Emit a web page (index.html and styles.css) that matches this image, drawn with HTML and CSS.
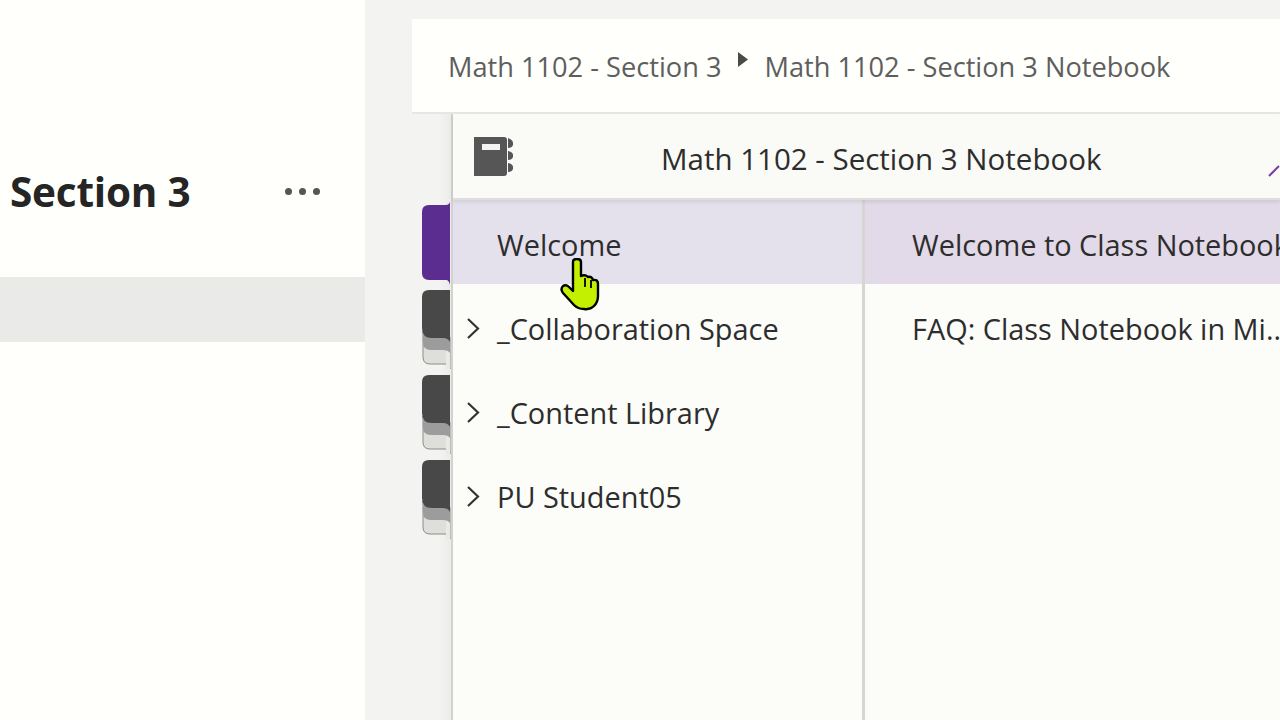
FILE: index.html
```html
<!DOCTYPE html>
<html lang="en">
<head>
<meta charset="utf-8">
<title>Math 1102 - Section 3 Notebook</title>
<link rel="stylesheet" href="styles.css">
</head>
<body>
<div class="app">
  <aside class="sidebar">
    <div class="team-head">
      <h1 class="team-name">Section 3</h1>
      <span class="more"><i></i><i></i><i></i></span>
    </div>
    <div class="team-row"></div>
  </aside>
  <main class="main">
    <div class="crumbs">
      <span>Math 1102 - Section 3</span>
      <svg class="crumb-arrow" width="12" height="18" viewBox="0 0 12 18"><path d="M1 1 L11 8.5 L1 16 Z" fill="#4a4a4a"/></svg>
      <span>Math 1102 - Section 3 Notebook</span>
    </div>
    <div class="notebook">
      <div class="tabs">
        <svg class="tab" width="29" height="84" viewBox="0 0 29 84"><path d="M28 0 V83 Q27 78 24 78 H7 Q0 78 0 71 V10 Q0 3 7 3 H24 Q27 3 28 0 Z" fill="#5c2d91"/></svg>
        <svg class="tab" width="29" height="84" viewBox="0 0 29 84"><use href="#stack"/></svg>
        <svg class="tab" width="29" height="84" viewBox="0 0 29 84"><use href="#stack"/></svg>
        <svg class="tab" width="29" height="84" viewBox="0 0 29 84"><use href="#stack"/></svg>
        <svg class="defs" width="0" height="0"><defs><g id="stack">
          <path d="M1 50 H28 V82 Q27 77 23 77 H8 Q1 77 1 70 Z" fill="#dededa" stroke="#8c8c8c" stroke-width="1"/>
          <path d="M24 60 H28 V82 H24 Z" fill="#e9e9e6"/>
          <path d="M0 44 H28 V66 Q26 63 21 63 H9 Q1 63 1 56 Z" fill="#9c9c9c"/>
          <path d="M7 3 H28 V55 Q26 51 21 51 H10 Q0 51 0 41 V10 Q0 3 7 3 Z" fill="#484848"/>
        </g></defs></svg>
      </div>
      <div class="page">
        <header class="page-head">
          <svg class="nb-icon" width="42" height="42" viewBox="0 0 42 42">
            <path d="M2 2 H32 Q35 2 35 5 V38 Q35 41 32 41 H2 Z" fill="#565656"/>
            <rect x="10" y="9" width="18" height="6" fill="#f2f2f0"/>
            <path d="M36 3 Q42 5 41 10 Q40 13 36 13 Z M36 16 Q42 17 41 22 Q40 25 36 25 Z M36 28 Q42 29 41 34 Q40 37 36 37 Z" fill="#565656"/>
          </svg>
          <span class="page-title">Math 1102 - Section 3 Notebook</span>
          <svg class="purple-mark" width="12" height="16" viewBox="0 0 12 16"><path d="M1 15 L11 5" stroke="#7b3fa0" stroke-width="2"/></svg>
        </header>
        <div class="columns">
          <ul class="sections">
            <li class="row selected"><span class="label">Welcome</span></li>
            <li class="row"><svg class="chev" width="14" height="24" viewBox="0 0 14 24"><path d="M2 2 L12 11.5 L2 21" fill="none" stroke="#333" stroke-width="2.2"/></svg><span class="label">_Collaboration Space</span></li>
            <li class="row"><svg class="chev" width="14" height="24" viewBox="0 0 14 24"><path d="M2 2 L12 11.5 L2 21" fill="none" stroke="#333" stroke-width="2.2"/></svg><span class="label">_Content Library</span></li>
            <li class="row"><svg class="chev" width="14" height="24" viewBox="0 0 14 24"><path d="M2 2 L12 11.5 L2 21" fill="none" stroke="#333" stroke-width="2.2"/></svg><span class="label">PU Student05</span></li>
          </ul>
          <ul class="pages">
            <li class="row selected-page"><span class="page-label">Welcome to Class Notebook</span></li>
            <li class="row"><span class="page-label">FAQ: Class Notebook in Microsoft Teams</span></li>
          </ul>
        </div>
      </div>
    </div>
  </main>
</div>
<svg class="cursor" width="40" height="54" viewBox="0 0 40 54">
  <path d="M13 4 Q13 1 17 1 Q21 1 21 4 V18 Q25 16 28 19 Q32 18 33 22 Q38 21 38 26 V38 Q38 44 34 48 Q30 52 24 51 Q18 51 14 47 L3 35 Q0 31 3 28 Q6 26 9 29 L13 33 Z" fill="#c2f000" stroke="#000" stroke-width="2.4" stroke-linejoin="round"/>
  <path d="M25 20 V29 M31 22 V30" stroke="#000" stroke-width="1.8" fill="none"/>
</svg>
</body>
</html>
```
FILE: styles.css
```css
* { box-sizing: border-box; }
html, body { margin: 0; width: 1280px; height: 720px; overflow: hidden; }
body { font-family: "Open Sans", "Noto Sans", sans-serif; background: #f3f3f2; color: #2b2b2b; position: relative; }
.app { display: flex; width: 1280px; height: 720px; }
.sidebar { width: 365px; flex: none; background: #fffffc; }
.team-head { display: flex; align-items: center; justify-content: space-between; height: 84px; margin-top: 150px; padding: 0 45px 0 10px; }
.team-name { margin: 0; font-size: 40.5px; font-weight: 700; color: #252525; line-height: 84px; letter-spacing: -0.2px; }
.more { display: flex; gap: 7px; margin-bottom: 2px; }
.more i { width: 7px; height: 7px; border-radius: 50%; background: #555; }
.team-row { height: 65px; margin-top: 43px; background: #eaeae8; }
.main { flex: 1; min-width: 0; padding: 19px 0 0 47px; overflow: hidden; display: flex; flex-direction: column; }
.crumbs { height: 95px; flex: none; background: #fffffc; border-bottom: 2px solid #e6e6e3; display: flex; align-items: center; padding: 1px 0 0 36px; font-size: 27.2px; color: #5e5e5e; white-space: nowrap; }
.crumb-arrow { margin: 0 15px 12px 16px; flex: none; }
.notebook { flex: 1; display: flex; min-height: 0; }
.tabs { width: 39px; flex: none; padding: 88px 0 0 10px; display: flex; flex-direction: column; gap: 1px; background: linear-gradient(to right, #f3f3f2 70%, #ebebe9); }
.tab { display: block; flex: none; }
.defs { position: absolute; }
.page { flex: 1; min-width: 0; background: #fcfcf9; border-left: 2px solid #d2d2d0; display: flex; flex-direction: column; }
.page-head { height: 86px; flex: none; display: flex; align-items: center; position: relative; z-index: 1; border-bottom: 2px solid #dededc; box-shadow: 0 2px 4px rgba(0,0,0,.09); background: #fafaf7; }
.nb-icon { margin-left: 19px; flex: none; }
.page-title { position: absolute; left: 208px; top: 23px; font-size: 29.5px; line-height: 44px; color: #2d2d2d; white-space: nowrap; }
.purple-mark { position: absolute; right: 0; top: 47px; }
.columns { flex: 1; display: flex; min-height: 0; }
.sections { width: 412px; flex: none; margin: 0; padding: 0; list-style: none; border-right: 3px solid #d6d6d4; }
.pages { flex: 1; min-width: 0; margin: 0; padding: 0; list-style: none; overflow: hidden; }
.row { height: 84px; display: flex; align-items: center; position: relative; white-space: nowrap; font-size: 28.9px; color: #2d2d2d; padding-top: 5px; }
.sections .row { padding-left: 44px; }
.selected { background: #e5e1ec; }
.selected-page { background: #e2d9e9; }
.chev { position: absolute; left: 13px; top: 33px; }
.page-label { padding-left: 47px; display: block; width: 430px; flex: none; overflow: hidden; text-overflow: ellipsis; }
.cursor { position: absolute; left: 560px; top: 258px; }
```
